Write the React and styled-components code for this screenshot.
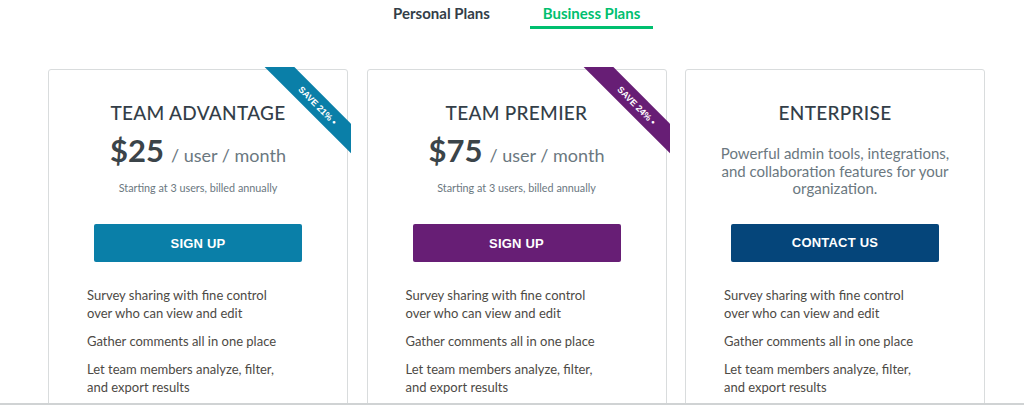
import React from "react";
import styled, { createGlobalStyle } from "styled-components";

const GlobalStyle = createGlobalStyle`
  html, body {
    margin: 0;
    padding: 0;
    background: #ffffff;
    overflow: hidden;
  }
  body {
    font-family: Lato, "Open Sans", sans-serif;
    color: #333e48;
  }
`;

const Page = styled.div`
  width: 937px;
  margin-left: 48px;
  height: 405px;
  overflow: hidden;
`;

const Tabs = styled.nav`
  display: flex;
  justify-content: center;
  gap: 27px;
  height: 29px;
  margin-bottom: 40px;
`;

const Tab = styled.a`
  display: flex;
  align-items: center;
  justify-content: center;
  width: 123px;
  height: 26px;
  font-size: 15px;
  font-weight: 700;
  color: ${(p) => (p.$active ? "#00bf6f" : "#333e48")};
  border-bottom: 3px solid ${(p) => (p.$active ? "#00bf6f" : "transparent")};
  text-decoration: none;
  cursor: pointer;
`;

const Cards = styled.div`
  display: grid;
  grid-template-columns: repeat(3, 300px);
  gap: 18.5px;
`;

const Card = styled.section`
  position: relative;
  height: 400px;
  border: 1px solid #d9dcdd;
  border-radius: 3px;
  display: flex;
  flex-direction: column;
  align-items: center;
  padding-top: 30px;
  box-sizing: border-box;
`;

const RibbonClip = styled.div`
  position: absolute;
  top: -3px;
  right: -4px;
  width: 92px;
  height: 92px;
  overflow: hidden;
`;

const Ribbon = styled.div`
  position: absolute;
  left: -16px;
  top: 25px;
  width: 144px;
  height: 21px;
  transform: rotate(45deg);
  background: ${(p) => p.$color};
  color: #fff;
  font-family: "Liberation Sans", Arial, sans-serif;
  font-weight: 700;
  font-size: 9px;
  display: flex;
  align-items: center;
  justify-content: center;
  padding-left: 8px;
  box-sizing: border-box;
`;

const Title = styled.h2`
  margin: 0;
  font-size: 19px;
  font-weight: 500;
  letter-spacing: 0.3px;
  color: #333e48;
  line-height: 26px;
`;

const PriceRow = styled.div`
  display: flex;
  align-items: baseline;
  gap: 7px;
  margin-top: 6px;
  line-height: 36px;
`;

const Amount = styled.span`
  font-size: 31px;
  font-weight: 700;
  color: #3b4449;
`;

const Unit = styled.span`
  font-size: 18px;
  color: #6b787f;
`;

const Note = styled.p`
  margin: 8px 0 0;
  font-size: 10.8px;
  color: #6b787f;
`;

const Blurb = styled.p`
  margin: 19px 0 0;
  width: 240px;
  text-align: center;
  font-size: 15px;
  line-height: 17.5px;
  color: #6b787f;
`;

const Button = styled.button`
  margin-top: ${(p) => p.$top}px;
  width: 208px;
  height: 38px;
  border: none;
  border-radius: 2px;
  background: ${(p) => p.$color};
  color: #ffffff;
  font-family: "Liberation Sans", Arial, sans-serif;
  font-weight: 700;
  font-size: 13px;
  letter-spacing: 0.2px;
  cursor: pointer;
`;

const Features = styled.ul`
  list-style: none;
  margin: 24px 0 0;
  padding: 0 0 0 38px;
  align-self: stretch;
  display: flex;
  flex-direction: column;
  gap: 10px;
`;

const Feature = styled.li`
  font-size: 13px;
  line-height: 18px;
  color: #4d4a45;
  width: 196px;
`;

const BottomRule = styled.div`
  position: fixed;
  left: 0;
  right: 0;
  bottom: 0;
  height: 2px;
  background: #d0d3d4;
`;

const features = [
  "Survey sharing with fine control over who can view and edit",
  "Gather comments all in one place",
  "Let team members analyze, filter, and export results",
];

const plans = [
  {
    name: "TEAM ADVANTAGE",
    price: "$25",
    color: "#0a7fa8",
    save: "SAVE 21% •",
    cta: "SIGN UP",
  },
  {
    name: "TEAM PREMIER",
    price: "$75",
    color: "#671e75",
    save: "SAVE 24% •",
    cta: "SIGN UP",
  },
  {
    name: "ENTERPRISE",
    color: "#05457a",
    blurb:
      "Powerful admin tools, integrations, and collaboration features for your organization.",
    cta: "CONTACT US",
  },
];

export default function App() {
  return (
    <>
      <GlobalStyle />
      <Page>
        <Tabs>
          <Tab>Personal Plans</Tab>
          <Tab $active>Business Plans</Tab>
        </Tabs>
        <Cards>
          {plans.map((plan) => (
            <Card key={plan.name}>
              {plan.save && (
                <RibbonClip>
                  <Ribbon $color={plan.color}>{plan.save}</Ribbon>
                </RibbonClip>
              )}
              <Title>{plan.name}</Title>
              {plan.price ? (
                <>
                  <PriceRow>
                    <Amount>{plan.price}</Amount>
                    <Unit>/ user / month</Unit>
                  </PriceRow>
                  <Note>Starting at 3 users, billed annually</Note>
                </>
              ) : (
                <Blurb>{plan.blurb}</Blurb>
              )}
              <Button $color={plan.color} $top={plan.price ? 30 : 26}>
                {plan.cta}
              </Button>
              <Features>
                {features.map((f) => (
                  <Feature key={f}>{f}</Feature>
                ))}
              </Features>
            </Card>
          ))}
        </Cards>
      </Page>
      <BottomRule />
    </>
  );
}
